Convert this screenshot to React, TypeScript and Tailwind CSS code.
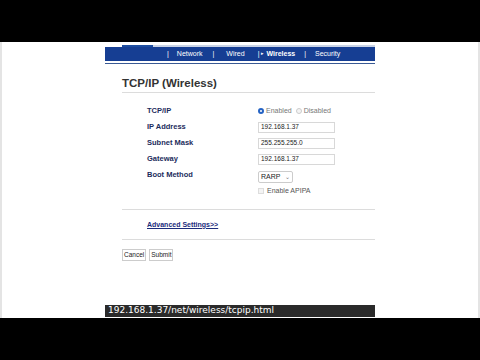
const rows = [
  { label: 'IP Address', value: '192.168.1.37' },
  { label: 'Subnet Mask', value: '255.255.255.0' },
  { label: 'Gateway', value: '192.168.1.37' },
];

function Label({ children }: { children: React.ReactNode }) {
  return <div className="w-[111px] text-[7.5px] font-bold text-[#1c2c5c]">{children}</div>;
}

export default function App() {
  return (
    <div className="flex h-[360px] w-[480px] flex-col bg-black font-['Liberation_Sans',Arial,sans-serif]">
      <div className="h-[42px]" />
      <div className="h-[276px] border-x-2 border-[#e4e4e4] bg-white pl-[103px]">
        <div className="w-[270px]">
          {/* nav */}
          <div className="mt-[3px] flex h-[2px]">
            <div className="w-[17px]" />
            <div className="w-[31px] bg-[#1d4da0]" />
            <div className="flex-1 bg-[#c9d3e6]" />
          </div>
          <div className="flex h-[14px] items-center bg-[#163e93] pl-[62px] text-[7px] text-white">
            <span className="mr-[8px]">|</span>
            <span className="mr-[10px]">Network</span>
            <span className="mr-[12px]">|</span>
            <span className="mr-[13px]">Wired</span>
            <span className="mr-[2px]">|</span>
            <span className="mr-[2px] text-[5px]">▸</span>
            <span className="mr-[9px] font-bold">Wireless</span>
            <span className="mr-[9px]">|</span>
            <span>Security</span>
          </div>
          <div className="mt-[2px] h-px bg-[#3a5a94]" />

          <div className="pl-[17px]">
            <div className="mt-[12px] text-[11.5px] leading-[14px] font-bold text-[#333]">TCP/IP (Wireless)</div>
            <div className="mt-[2px] h-px bg-[#dcdcdc]" />

            <div className="pl-[25px] pt-[10px]">
              <div className="flex h-[16px] items-center">
                <Label>TCP/IP</Label>
                <div className="flex items-center text-[7px] text-[#777]">
                  <span className="mr-[2px] inline-block h-[6px] w-[6px] rounded-full border-[2px] border-[#2563c4] bg-white" />
                  <span className="mr-[4px]">Enabled</span>
                  <span className="mr-[2px] inline-block h-[6px] w-[6px] rounded-full border border-[#ccc] bg-[#f4f4f4]" />
                  <span>Disabled</span>
                </div>
              </div>
              {rows.map((r) => (
                <div key={r.label} className="flex h-[16px] items-center">
                  <Label>{r.label}</Label>
                  <div className="flex h-[11px] w-[77px] items-center border border-[#d8d8d8] pl-[2px] text-[6.5px] text-[#222]">
                    {r.value}
                  </div>
                </div>
              ))}
              <div className="flex h-[16px] items-center">
                <Label>Boot Method</Label>
                <div className="mt-[4px] flex h-[12px] w-[35px] items-center justify-between rounded-[2px] border border-[#ccc] px-[2px] text-[7px] text-[#222]">
                  <span>RARP</span>
                  <span className="text-[6px] text-[#777]">⌄</span>
                </div>
              </div>
              <div className="mt-[3px] flex items-center pl-[111px] text-[7px] text-[#555]">
                <span className="mr-[3px] inline-block h-[6px] w-[6px] border border-[#ddd] bg-[#f4f4f4]" />
                <span>Enable APIPA</span>
              </div>
            </div>

            <div className="mt-[12px] h-px bg-[#dcdcdc]" />
            <div className="flex h-[29px] items-center pt-[2px] pl-[25px] text-[7px] font-bold text-[#1c2c7c] underline">
              Advanced Settings&gt;&gt;
            </div>
            <div className="h-px bg-[#dcdcdc]" />
          </div>

          <div className="mt-[9px] flex gap-[3px] pl-[17px]">
            <div className="border border-[#ccc] px-[1px] text-[6.5px] leading-[10px] text-[#222]">Cancel</div>
            <div className="border border-[#ccc] px-[1px] text-[6.5px] leading-[10px] text-[#222]">Submit</div>
          </div>

          <div className="mt-[44px] flex h-[12px] items-center bg-[#2a2a2a] pl-[3px] font-['DejaVu_Sans',sans-serif] text-[9px] text-white">
            192.168.1.37/net/wireless/tcpip.html
          </div>
        </div>
      </div>
      <div className="flex-1" />
    </div>
  );
}
